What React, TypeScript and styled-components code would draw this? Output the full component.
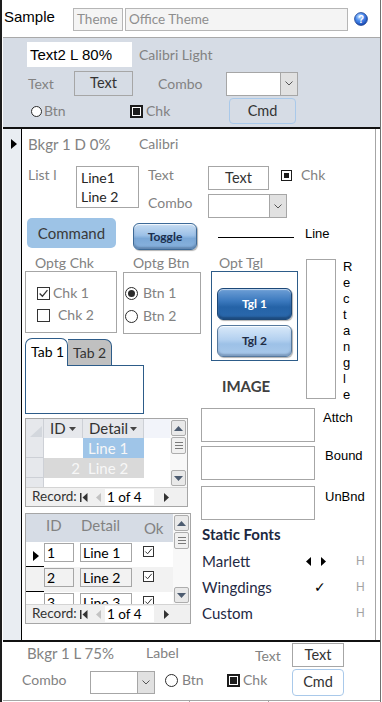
import { FC } from 'react';
import styled, { createGlobalStyle, css } from 'styled-components';

const CAL = `Lato, "Open Sans", "DejaVu Sans", sans-serif`;
const ARIAL = `"Liberation Sans", Arial, sans-serif`;
const LABEL = '#828282';
const EDGE = '#a6a6a6';
const TAB_EDGE = '#2d5c89';

const GlobalStyle = createGlobalStyle`
  html, body { margin: 0; padding: 0; background: #fff; }
  body { width: 382px; height: 702px; overflow: hidden; font-family: ${CAL}; }
  *, *::before, *::after { box-sizing: border-box; }
`;

const Frame = styled.div`
  width: 381px;
  height: 702px;
  border-left: 2px solid #1d1d1d;
  border-right: 1px solid #707070;
  display: flex;
  flex-direction: column;
  overflow: hidden;
`;

/* ---------- title ---------- */
const TitleBar = styled.header`
  flex: none;
  height: 37px;
  display: flex;
  align-items: flex-start;
  padding: 8px 0 0 2px;
`;

const FormTitle = styled.div`
  width: 69px;
  font: 15px/18px ${ARIAL};
  color: #000;
`;

const ThemeField = styled.div<{ $w: number }>`
  width: ${p => p.$w}px;
  height: 23px;
  margin-right: 2px;
  padding-left: 3px;
  border: 1px solid #b6b6b6;
  background: #f4f4f4;
  color: #8e8e8e;
  font: 13.5px/21px ${CAL};
`;

const HelpIcon = styled.svg`
  flex: none;
  margin: 4px 0 0 4px;
`;

/* ---------- shared controls ---------- */
const Caption = styled.span<{ $w?: number; $size?: number; $mt?: number; $ml?: number; $pl?: number }>`
  flex: none;
  ${p => p.$w !== undefined && css`width: ${p.$w}px;`}
  margin-top: ${p => p.$mt ?? 0}px;
  margin-left: ${p => p.$ml ?? 0}px;
  padding-left: ${p => p.$pl ?? 0}px;
  font: ${p => p.$size ?? 14}px/18px ${CAL};
  color: ${LABEL};
  white-space: nowrap;
`;

const TextBox = styled.div<{ $w: number; $h: number; $mt?: number }>`
  flex: none;
  width: ${p => p.$w}px;
  height: ${p => p.$h}px;
  margin-top: ${p => p.$mt ?? 0}px;
  border: 1px solid ${EDGE};
  display: flex;
  align-items: center;
  justify-content: center;
  font: 14.5px/1 ${CAL};
  color: #333;
`;

const ComboBox = styled.div<{ $w: number; $h: number; $mt?: number }>`
  flex: none;
  width: ${p => p.$w}px;
  height: ${p => p.$h}px;
  margin-top: ${p => p.$mt ?? 0}px;
  display: flex;
  border: 1px solid ${EDGE};
  background: #fff;
`;

const ComboField = styled.div`
  flex: 1;
`;

const ComboButton = styled.div`
  width: 17px;
  border-left: 1px solid ${EDGE};
  background: #e1e1e1;
  display: flex;
  align-items: center;
  justify-content: center;
`;

const OptionItem = styled.div<{ $w?: number; $gap: number; $ml?: number; $mt?: number }>`
  flex: none;
  display: flex;
  align-items: center;
  gap: ${p => p.$gap}px;
  ${p => p.$w !== undefined && css`width: ${p.$w}px;`}
  margin-left: ${p => p.$ml ?? 0}px;
  margin-top: ${p => p.$mt ?? 0}px;
  height: 18px;
  font: 14px/18px ${CAL};
  color: ${LABEL};
`;

const RadioMark = styled.span<{ $size: number; $on?: boolean }>`
  flex: none;
  width: ${p => p.$size}px;
  height: ${p => p.$size}px;
  border: 1px solid #2b2b2b;
  border-radius: 50%;
  background: #fff;
  display: flex;
  align-items: center;
  justify-content: center;
  ${p =>
    p.$on &&
    css`
      &::after {
        content: '';
        width: ${p.$size - 6}px;
        height: ${p.$size - 6}px;
        border-radius: 50%;
        background: #2b2b2b;
      }
    `}
`;

const FilledCheck = styled.span<{ $size: number; $border: number; $inner: number }>`
  flex: none;
  width: ${p => p.$size}px;
  height: ${p => p.$size}px;
  border: ${p => p.$border}px solid #1c1c1c;
  background: #fff;
  display: flex;
  align-items: center;
  justify-content: center;
  &::after {
    content: '';
    width: ${p => p.$inner}px;
    height: ${p => p.$inner}px;
    background: #1c1c1c;
  }
`;

const TickBox = styled.span<{ $size: number; $ml?: number; $mt?: number }>`
  flex: none;
  width: ${p => p.$size}px;
  height: ${p => p.$size}px;
  margin-left: ${p => p.$ml ?? 0}px;
  margin-top: ${p => p.$mt ?? 0}px;
  border: 1px solid #333;
  background: #fff;
  display: flex;
  align-items: center;
  justify-content: center;
`;

const CmdButton = styled.div<{ $w: number; $h: number; $bg: string }>`
  flex: none;
  width: ${p => p.$w}px;
  height: ${p => p.$h}px;
  border: 1px solid #a9c9ea;
  border-radius: 4px;
  background: ${p => p.$bg};
  display: flex;
  align-items: center;
  justify-content: center;
  font: 14.5px/1 ${CAL};
  color: #333;
`;

/* ---------- header band ---------- */
const HeaderSection = styled.section`
  flex: none;
  margin-left: 1px;
  width: 377px;
  height: 92px;
  background: #d6dce5;
  border-top: 1px solid #a9a9a9;
  border-bottom: 2px solid #111;
  padding: 4px 0 0 24px;
`;

const BandRow = styled.div<{ $h: number; $mt?: number; $pl?: number }>`
  display: flex;
  align-items: center;
  height: ${p => p.$h}px;
  margin-top: ${p => p.$mt ?? 0}px;
  padding-left: ${p => p.$pl ?? 0}px;
`;

const AccentBox = styled.div`
  flex: none;
  width: 105px;
  height: 25px;
  padding-left: 3px;
  background: #fff;
  font: 15px/25px ${ARIAL};
  color: #000;
`;

/* ---------- detail ---------- */
const DetailSection = styled.section`
  flex: none;
  margin-left: 1px;
  width: 377px;
  height: 511px;
  display: flex;
`;

const RecordStrip = styled.div`
  flex: none;
  width: 19px;
  background: #e9edf2;
  border-right: 1px solid #000;
  padding: 4px 0 0 8px;
`;

const DetailBody = styled.div`
  flex: none;
  width: 354px;
  border-right: 1px solid ${EDGE};
  display: flex;
  flex-direction: column;
`;

const TopLine = styled.div`
  display: flex;
  height: 18px;
  margin-top: 6px;
  padding-left: 6px;
`;

const FieldsRow = styled.div`
  display: flex;
  align-items: flex-start;
  height: 52px;
  margin-top: 13px;
  padding-left: 6px;
`;

const ListBox = styled.div`
  flex: none;
  width: 63px;
  height: 42px;
  border: 1px solid ${EDGE};
  padding: 1px 0 0 4px;
  font: 14px/19px ${CAL};
  color: #262626;
`;

const LabelStack = styled.div`
  flex: none;
  width: 60px;
  margin-left: 9px;
  display: flex;
  flex-direction: column;
`;

const FieldStack = styled.div`
  display: flex;
  flex-direction: column;
`;

const FieldLine = styled.div`
  display: flex;
  align-items: flex-start;
  height: 24px;
`;

const ButtonsRow = styled.div`
  display: flex;
  align-items: flex-start;
  height: 32px;
`;

const CommandButton = styled.div`
  flex: none;
  width: 89px;
  height: 30px;
  margin-left: 5px;
  border-radius: 5px;
  background: #9dc3e6;
  display: flex;
  align-items: center;
  justify-content: center;
  font: 15px/1 ${CAL};
  color: #3a3a3a;
`;

type Tone = 'toggle' | 'dark' | 'light';

const tones: Record<Tone, ReturnType<typeof css>> = {
  toggle: css`
    background: linear-gradient(#c6dcf2 0%, #9dc1e7 45%, #7ba8d7 58%, #8ab3de 100%);
    border: 1px solid #3d6a98;
    color: #1b2f4e;
    box-shadow: inset 0 1px 1px rgba(255, 255, 255, 0.85), inset 0 -2px 2px rgba(20, 50, 90, 0.35),
      1px 1px 1px rgba(0, 0, 0, 0.3);
  `,
  dark: css`
    background: linear-gradient(#6e9fd6 0%, #3b79be 40%, #2563a7 60%, #2b69ac 100%);
    border: 1px solid #1c4878;
    color: #fff;
    box-shadow: inset 0 1px 1px rgba(255, 255, 255, 0.6), inset 0 -2px 2px rgba(10, 30, 60, 0.4),
      1px 1px 1px rgba(0, 0, 0, 0.3);
  `,
  light: css`
    background: linear-gradient(#d9e9f9 0%, #b4d1f0 45%, #9dc1e7 60%, #a9c9ea 100%);
    border: 1px solid #56799e;
    color: #1f2d46;
    box-shadow: inset 0 1px 1px rgba(255, 255, 255, 0.9), inset 0 -2px 2px rgba(40, 70, 110, 0.35),
      1px 1px 1px rgba(0, 0, 0, 0.3);
  `,
};

const BevelButton = styled.div<{ $tone: Tone; $w: number; $h: number; $ml?: number; $mt?: number }>`
  flex: none;
  width: ${p => p.$w}px;
  height: ${p => p.$h}px;
  margin-left: ${p => p.$ml ?? 0}px;
  margin-top: ${p => p.$mt ?? 0}px;
  border-radius: 6px;
  display: flex;
  align-items: center;
  justify-content: center;
  font: 700 12px/1 ${CAL};
  ${p => tones[p.$tone]}
`;

const LineShape = styled.div`
  flex: none;
  width: 76px;
  height: 1px;
  margin: 19px 0 0 21px;
  background: #000;
`;

const ShapeLabel = styled.span<{ $ml?: number; $mt?: number }>`
  flex: none;
  margin-left: ${p => p.$ml ?? 0}px;
  margin-top: ${p => p.$mt ?? 0}px;
  font: 13px/15px ${ARIAL};
  color: #000;
`;

const MainArea = styled.div`
  display: flex;
  margin-top: 4px;
`;

const LeftColumn = styled.div`
  flex: none;
  width: 179px;
  padding-left: 3px;
  display: flex;
  flex-direction: column;
`;

const RightColumn = styled.div`
  flex: 1;
  display: flex;
  flex-direction: column;
`;

const GroupRow = styled.div`
  display: flex;
  gap: 6px;
  height: 80px;
`;

const GroupBlock = styled.div<{ $ml?: number }>`
  flex: none;
  margin-left: ${p => p.$ml ?? 0}px;
  display: flex;
  flex-direction: column;
`;

const GroupCaption = styled.div<{ $pl: number }>`
  height: 17px;
  padding-left: ${p => p.$pl}px;
  font: 14px/17px ${CAL};
  color: ${LABEL};
`;

const GroupFrame = styled.div<{ $w: number; $h: number; $mt?: number; $pad: string; $edge?: string }>`
  width: ${p => p.$w}px;
  height: ${p => p.$h}px;
  margin-top: ${p => p.$mt ?? 0}px;
  padding: ${p => p.$pad};
  border: 1px solid ${p => p.$edge ?? EDGE};
  display: flex;
  flex-direction: column;
`;

const GroupLine = styled.div<{ $gap: number; $mt?: number }>`
  display: flex;
  align-items: center;
  gap: ${p => p.$gap}px;
  height: 14px;
  margin-top: ${p => p.$mt ?? 0}px;
  font: 14px/18px ${CAL};
  color: ${LABEL};
`;

const TabControl = styled.div`
  margin-top: 4px;
  display: flex;
  flex-direction: column;
`;

const TabStrip = styled.div`
  display: flex;
  align-items: flex-start;
  height: 27px;
`;

const TabHandle = styled.div<{ $active?: boolean }>`
  flex: none;
  width: ${p => (p.$active ? 43 : 44)}px;
  height: ${p => (p.$active ? 28 : 26)}px;
  margin-top: ${p => (p.$active ? 0 : 1)}px;
  padding: 3px 0 0 5px;
  border: 1px solid ${TAB_EDGE};
  border-bottom: none;
  ${p => !p.$active && css`border-left: none;`}
  border-radius: ${p => (p.$active ? '7px 7px 0 0' : '0 7px 0 0')};
  background: ${p => (p.$active ? '#fff' : '#c0c0c0')};
  font: 14px/20px ${CAL};
  color: ${p => (p.$active ? '#000' : '#333')};
  position: relative;
  z-index: ${p => (p.$active ? 1 : 0)};
`;

const TabPage = styled.div`
  width: 119px;
  height: 49px;
  border: 1px solid ${TAB_EDGE};
`;

/* datasheets */
const Sheet = styled.div<{ $w: number; $h: number; $mt: number }>`
  flex: none;
  width: ${p => p.$w}px;
  height: ${p => p.$h}px;
  margin-top: ${p => p.$mt}px;
  border: 1px solid ${EDGE};
  background: #fff;
  display: flex;
  flex-direction: column;
`;

const SheetBody = styled.div<{ $h: number }>`
  flex: none;
  height: ${p => p.$h}px;
  display: flex;
`;

const SheetGrid = styled.div`
  flex: 1;
  display: flex;
  flex-direction: column;
  overflow: hidden;
`;

const GridHead = styled.div`
  flex: none;
  height: 19px;
  display: flex;
`;

const CornerCell = styled.div`
  width: 18px;
  background: #e6e8ec;
  border-right: 1px solid #cdd0d6;
  display: flex;
  align-items: flex-end;
  justify-content: flex-end;
  padding: 0 1px 1px 0;
`;

const HeadCell = styled.div<{ $w: number }>`
  flex: none;
  width: ${p => p.$w}px;
  background: #e6e8ec;
  border-right: 1px solid #cdd0d6;
  display: flex;
  align-items: center;
  justify-content: space-between;
  padding: 0 6px 0 6px;
  font: 15px/19px ${CAL};
  color: #333;
`;

const HeadFill = styled.div`
  flex: 1;
  background: #f2f4fa;
`;

const GridRow = styled.div`
  flex: none;
  height: 20px;
  display: flex;
`;

const SelectorCell = styled.div`
  flex: none;
  width: 18px;
  background: #e6e8ec;
  border-right: 1px solid #cdd0d6;
  border-bottom: 1px solid #cdd0d6;
`;

type CellTone = 'plain' | 'selected' | 'grey';

const DataCell = styled.div<{ $w: number; $tone: CellTone; $right?: boolean }>`
  flex: none;
  width: ${p => p.$w}px;
  padding: ${p => (p.$right ? '0 3px 0 0' : '0 0 0 5px')};
  text-align: ${p => (p.$right ? 'right' : 'left')};
  font: 15px/20px ${CAL};
  background: ${p => (p.$tone === 'selected' ? '#9fc5e8' : p.$tone === 'grey' ? '#d9d9d9' : '#fff')};
  color: ${p => (p.$tone === 'plain' ? '#000' : '#f7f7f7')};
`;

const FormHead = styled.div`
  flex: none;
  height: 28px;
  display: flex;
  align-items: flex-start;
  padding-top: 2px;
  background: #d6dce5;
`;

const FormRow = styled.div<{ $alt?: boolean }>`
  flex: none;
  height: 25px;
  display: flex;
  align-items: flex-start;
  background: ${p => (p.$alt ? '#f2f2f2' : '#fff')};
`;

const FormSelector = styled.div`
  flex: none;
  width: 18px;
  height: 25px;
  border-bottom: 1px solid #000;
  padding: 3px 0 0 7px;
`;

const FormField = styled.div<{ $w: number; $ml?: number }>`
  flex: none;
  width: ${p => p.$w}px;
  height: 19px;
  margin: 1px 0 0 ${p => p.$ml ?? 0}px;
  padding-left: 2px;
  border: 1px solid ${EDGE};
  font: 14px/17px ${CAL};
  color: #000;
`;

const ScrollBar = styled.div`
  flex: none;
  width: 17px;
  padding: 1px 1px 1px 1px;
  background: #f8f8f8;
  display: flex;
  flex-direction: column;
  align-items: center;
`;

const ScrollButton = styled.div`
  flex: none;
  width: 15px;
  height: 16px;
  border: 1px solid #adadad;
  border-radius: 2px;
  background: #e9e9e9;
  display: flex;
  align-items: center;
  justify-content: center;
`;

const ScrollThumb = styled.div`
  flex: none;
  width: 15px;
  height: 17px;
  margin-top: 1px;
  border: 1px solid #adadad;
  border-radius: 2px;
  background: #f0f0f0;
  display: flex;
  flex-direction: column;
  align-items: center;
  justify-content: center;
  gap: 2px;
  span {
    width: 8px;
    height: 1px;
    background: #7a7a7a;
  }
`;

const ScrollTrack = styled.div`
  flex: 1;
`;

const RecordNav = styled.div`
  flex: 1;
  display: flex;
  align-items: center;
  background: #f0f0f0;
  border-top: 1px solid #d4d4d4;
`;

const NavLabel = styled.span`
  flex: none;
  width: 54px;
  padding-left: 6px;
  font: 13.5px/1 ${CAL};
  color: #333;
`;

const NavBox = styled.span`
  flex: none;
  width: 49px;
  height: 16px;
  margin-left: 4px;
  padding-left: 2px;
  background: #fff;
  font: 13.5px/16px ${CAL};
  color: #000;
`;

const NavGlyph = styled.svg<{ $ml?: number }>`
  flex: none;
  margin-left: ${p => p.$ml ?? 0}px;
`;

/* right column */
const TopRow = styled.div`
  display: flex;
  align-items: flex-start;
  height: 145px;
`;

const ImageLabel = styled.div`
  margin-top: 15px;
  padding-left: 11px;
  font: 700 15px/20px ${CAL};
  color: #404040;
`;

const RectBlock = styled.div`
  flex: none;
  margin: 5px 0 0 8px;
  display: flex;
  align-items: flex-start;
`;

const RectBox = styled.div`
  width: 30px;
  height: 140px;
  border: 1px solid ${EDGE};
`;

const RectLetters = styled.div`
  margin-left: 7px;
  display: flex;
  flex-direction: column;
  font: 13px/16px ${ARIAL};
  color: #000;
`;

const AttachRow = styled.div<{ $mt: number }>`
  display: flex;
  align-items: flex-start;
  margin-top: ${p => p.$mt}px;
`;

const AttachFrame = styled.div`
  flex: none;
  width: 114px;
  height: 34px;
  border: 1px solid ${EDGE};
`;

const FontsHeading = styled.div`
  margin-top: 5px;
  padding-left: 1px;
  font: 700 15px/18px ${CAL};
  color: #1c2840;
`;

const FontRow = styled.div<{ $mt?: number }>`
  display: flex;
  align-items: center;
  height: 26px;
  margin-top: ${p => p.$mt ?? 0}px;
`;

const FontName = styled.span`
  flex: none;
  width: 105px;
  padding-left: 1px;
  font: 15px/18px ${CAL};
  color: #1f2a44;
`;

const GlyphCell = styled.span<{ $pl?: number }>`
  flex: none;
  width: 50px;
  padding-left: ${p => p.$pl ?? 0}px;
  display: flex;
  align-items: center;
  gap: 10px;
  font: 14px/18px "DejaVu Sans", sans-serif;
  color: #000;
`;

const HMark = styled.span`
  font: 12px/1 ${ARIAL};
  color: #a3a3a3;
`;

/* ---------- footer ---------- */
const FooterSection = styled.footer`
  flex: none;
  margin-left: 1px;
  width: 377px;
  height: 60px;
  border-top: 2px solid #111;
`;

const FooterRow = styled.div<{ $pl: number }>`
  display: flex;
  align-items: flex-start;
  height: 27px;
  padding-left: ${p => p.$pl}px;
`;

const BottomEdge = styled.div`
  flex: none;
  margin-left: 1px;
  width: 377px;
  height: 2px;
  border-top: 1px solid ${EDGE};
  display: flex;
`;

const EdgeSegment = styled.span<{ $w: number }>`
  width: ${p => p.$w}px;
  border-right: 1px solid ${EDGE};
`;

/* ---------- drawings ---------- */
const Chevron: FC = () => (
  <svg width="8" height="5" viewBox="0 0 8 5">
    <path d="M0.5 0.5L4 4L7.5 0.5" fill="none" stroke="#555" strokeWidth="1" />
  </svg>
);

const Combo: FC<{ w: number; h: number; mt?: number }> = ({ w, h, mt }) => (
  <ComboBox $w={w} $h={h} $mt={mt}>
    <ComboField />
    <ComboButton>
      <Chevron />
    </ComboButton>
  </ComboBox>
);

const Tick: FC<{ size: number }> = ({ size }) => (
  <svg width={size} height={size} viewBox="0 0 10 10">
    <path d="M1.5 5L4 7.5L8.6 2" fill="none" stroke="#333" strokeWidth="1.1" />
  </svg>
);

const Pointer: FC = () => (
  <svg width="6" height="10" viewBox="0 0 6 10">
    <path d="M0 0L6 5L0 10Z" fill="#000" />
  </svg>
);

const SortArrow: FC = () => (
  <svg width="7" height="4" viewBox="0 0 7 4">
    <path d="M0 0H7L3.5 4Z" fill="#444" />
  </svg>
);

const Scroller: FC = () => (
  <ScrollBar>
    <ScrollButton>
      <svg width="9" height="5" viewBox="0 0 9 5">
        <path d="M0 5H9L4.5 0Z" fill="#4d5c70" />
      </svg>
    </ScrollButton>
    <ScrollThumb>
      <span />
      <span />
      <span />
    </ScrollThumb>
    <ScrollTrack />
    <ScrollButton>
      <svg width="9" height="5" viewBox="0 0 9 5">
        <path d="M0 0H9L4.5 5Z" fill="#4d5c70" />
      </svg>
    </ScrollButton>
  </ScrollBar>
);

const Navigator: FC = () => (
  <RecordNav>
    <NavLabel>Record:</NavLabel>
    <NavGlyph width="8" height="9" viewBox="0 0 8 9">
      <rect x="0" y="0" width="1.5" height="9" fill="#333" />
      <path d="M7.5 0V9L2.5 4.5Z" fill="#333" />
    </NavGlyph>
    <NavGlyph $ml={8} width="5" height="9" viewBox="0 0 5 9">
      <path d="M5 0V9L0 4.5Z" fill="#c3c3c3" />
    </NavGlyph>
    <NavBox>1 of 4</NavBox>
    <NavGlyph $ml={10} width="5" height="9" viewBox="0 0 5 9">
      <path d="M0 0V9L5 4.5Z" fill="#333" />
    </NavGlyph>
  </RecordNav>
);

const App: FC = () => {
  return (
    <>
      <GlobalStyle />
      <Frame>
        <TitleBar>
          <FormTitle>Sample</FormTitle>
          <ThemeField $w={50}>Theme</ThemeField>
          <ThemeField $w={223}>Office Theme</ThemeField>
          <HelpIcon width="14" height="14" viewBox="0 0 14 14">
            <defs>
              <radialGradient id="helpGlow" cx="40%" cy="32%" r="70%">
                <stop offset="0" stopColor="#d4e6ff" />
                <stop offset="0.45" stopColor="#4d8ff0" />
                <stop offset="1" stopColor="#1545b0" />
              </radialGradient>
            </defs>
            <circle cx="7" cy="7" r="6.4" fill="url(#helpGlow)" stroke="#1b3f8c" strokeWidth="0.8" />
            <text x="7" y="10.6" textAnchor="middle" fontSize="10" fontWeight="700" fill="#fff" fontFamily="Liberation Sans, Arial, sans-serif">
              ?
            </text>
          </HelpIcon>
        </TitleBar>

        <HeaderSection>
          <BandRow $h={25}>
            <AccentBox>Text2 L 80%</AccentBox>
            <Caption $ml={7}>Calibri Light</Caption>
          </BandRow>
          <BandRow $h={25} $mt={4}>
            <Caption $w={47} $pl={1}>
              Text
            </Caption>
            <TextBox $w={59} $h={25}>
              Text
            </TextBox>
            <Caption $w={68} $ml={25}>
              Combo
            </Caption>
            <Combo w={72} h={24} />
          </BandRow>
          <BandRow $h={26} $mt={2}>
            <OptionItem $w={99} $gap={2} $ml={4}>
              <RadioMark $size={11} />
              Btn
            </OptionItem>
            <OptionItem $w={99} $gap={3}>
              <FilledCheck $size={13} $border={2} $inner={7} />
              Chk
            </OptionItem>
            <CmdButton $w={67} $h={26} $bg="transparent">
              Cmd
            </CmdButton>
          </BandRow>
        </HeaderSection>

        <DetailSection>
          <RecordStrip>
            <Pointer />
          </RecordStrip>
          <DetailBody>
            <TopLine>
              <Caption $w={111} $size={15}>
                Bkgr 1 D 0%
              </Caption>
              <Caption $size={14}>Calibri</Caption>
            </TopLine>

            <FieldsRow>
              <Caption $w={48}>List l</Caption>
              <ListBox>
                <div>Line1</div>
                <div>Line 2</div>
              </ListBox>
              <LabelStack>
                <Caption>Text</Caption>
                <Caption $mt={10}>Combo</Caption>
              </LabelStack>
              <FieldStack>
                <FieldLine>
                  <TextBox $w={61} $h={24}>
                    Text
                  </TextBox>
                  <OptionItem $gap={9} $ml={12}>
                    <FilledCheck $size={11} $border={1} $inner={5} />
                    Chk
                  </OptionItem>
                </FieldLine>
                <Combo w={79} h={24} mt={4} />
              </FieldStack>
            </FieldsRow>

            <ButtonsRow>
              <CommandButton>Command</CommandButton>
              <BevelButton $tone="toggle" $w={64} $h={27} $ml={17} $mt={5}>
                Toggle
              </BevelButton>
              <LineShape />
              <ShapeLabel $ml={11} $mt={8}>
                Line
              </ShapeLabel>
            </ButtonsRow>

            <MainArea>
              <LeftColumn>
                <GroupRow>
                  <GroupBlock>
                    <GroupCaption $pl={10}>Optg Chk</GroupCaption>
                    <GroupFrame $w={92} $h={62} $pad="14px 0 0 11px">
                      <GroupLine $gap={3}>
                        <TickBox $size={13}>
                          <Tick size={11} />
                        </TickBox>
                        Chk 1
                      </GroupLine>
                      <GroupLine $gap={8} $mt={8}>
                        <TickBox $size={13} />
                        Chk 2
                      </GroupLine>
                    </GroupFrame>
                  </GroupBlock>
                  <GroupBlock>
                    <GroupCaption $pl={10}>Optg Btn</GroupCaption>
                    <GroupFrame $w={78} $h={62} $mt={1} $pad="13px 0 0 1px">
                      <GroupLine $gap={5}>
                        <RadioMark $size={13} $on />
                        Btn 1
                      </GroupLine>
                      <GroupLine $gap={5} $mt={9}>
                        <RadioMark $size={13} />
                        Btn 2
                      </GroupLine>
                    </GroupFrame>
                  </GroupBlock>
                </GroupRow>

                <TabControl>
                  <TabStrip>
                    <TabHandle $active>Tab 1</TabHandle>
                    <TabHandle>Tab 2</TabHandle>
                  </TabStrip>
                  <TabPage />
                </TabControl>

                <Sheet $w={163} $h={89} $mt={4}>
                  <SheetBody $h={68}>
                    <SheetGrid>
                      <GridHead>
                        <CornerCell>
                          <svg width="12" height="11" viewBox="0 0 12 11">
                            <path d="M12 0V11H0Z" fill="#d3d7dd" />
                          </svg>
                        </CornerCell>
                        <HeadCell $w={39}>
                          ID
                          <SortArrow />
                        </HeadCell>
                        <HeadCell $w={61}>
                          Detail
                          <SortArrow />
                        </HeadCell>
                        <HeadFill />
                      </GridHead>
                      <GridRow>
                        <SelectorCell />
                        <DataCell $w={39} $tone="plain" />
                        <DataCell $w={61} $tone="selected">
                          Line 1
                        </DataCell>
                      </GridRow>
                      <GridRow>
                        <SelectorCell />
                        <DataCell $w={39} $tone="grey" $right>
                          2
                        </DataCell>
                        <DataCell $w={61} $tone="grey">
                          Line 2
                        </DataCell>
                      </GridRow>
                      <GridRow>
                        <SelectorCell />
                      </GridRow>
                    </SheetGrid>
                    <Scroller />
                  </SheetBody>
                  <Navigator />
                </Sheet>

                <Sheet $w={166} $h={111} $mt={6}>
                  <SheetBody $h={90}>
                    <SheetGrid>
                      <FormHead>
                        <Caption $w={55} $pl={20} $size={15}>
                          ID
                        </Caption>
                        <Caption $w={63} $size={15}>
                          Detail
                        </Caption>
                        <Caption $mt={3} $size={15}>
                          Ok
                        </Caption>
                      </FormHead>
                      <FormRow>
                        <FormSelector>
                          <Pointer />
                        </FormSelector>
                        <FormField $w={30}>1</FormField>
                        <FormField $w={52} $ml={6}>
                          Line 1
                        </FormField>
                        <TickBox $size={11} $ml={11} $mt={4}>
                          <Tick size={9} />
                        </TickBox>
                      </FormRow>
                      <FormRow $alt>
                        <FormSelector />
                        <FormField $w={30}>2</FormField>
                        <FormField $w={52} $ml={6}>
                          Line 2
                        </FormField>
                        <TickBox $size={11} $ml={11} $mt={4}>
                          <Tick size={9} />
                        </TickBox>
                      </FormRow>
                      <FormRow>
                        <FormSelector />
                        <FormField $w={30}>3</FormField>
                        <FormField $w={52} $ml={6}>
                          Line 3
                        </FormField>
                        <TickBox $size={11} $ml={11} $mt={4}>
                          <Tick size={9} />
                        </TickBox>
                      </FormRow>
                    </SheetGrid>
                    <Scroller />
                  </SheetBody>
                  <Navigator />
                </Sheet>
              </LeftColumn>

              <RightColumn>
                <TopRow>
                  <GroupBlock $ml={10}>
                    <GroupCaption $pl={8}>Opt Tgl</GroupCaption>
                    <GroupFrame $w={87} $h={90} $pad="16px 0 0 5px" $edge={TAB_EDGE}>
                      <BevelButton $tone="dark" $w={75} $h={32}>
                        Tgl 1
                      </BevelButton>
                      <BevelButton $tone="light" $w={75} $h={32} $mt={5}>
                        Tgl 2
                      </BevelButton>
                    </GroupFrame>
                    <ImageLabel>IMAGE</ImageLabel>
                  </GroupBlock>
                  <RectBlock>
                    <RectBox />
                    <RectLetters>
                      {'Rectangle'.split('').map((c, i) => (
                        <span key={i}>{c}</span>
                      ))}
                    </RectLetters>
                  </RectBlock>
                </TopRow>

                <AttachRow $mt={9}>
                  <AttachFrame />
                  <ShapeLabel $ml={8} $mt={2}>
                    Attch
                  </ShapeLabel>
                </AttachRow>
                <AttachRow $mt={4}>
                  <AttachFrame />
                  <ShapeLabel $ml={10} $mt={2}>
                    Bound
                  </ShapeLabel>
                </AttachRow>
                <AttachRow $mt={6}>
                  <AttachFrame />
                  <ShapeLabel $ml={10} $mt={3}>
                    UnBnd
                  </ShapeLabel>
                </AttachRow>

                <FontsHeading>Static Fonts</FontsHeading>
                <FontRow $mt={5}>
                  <FontName>Marlett</FontName>
                  <GlyphCell>
                    <svg width="5" height="9" viewBox="0 0 5 9">
                      <path d="M5 0V9L0 4.5Z" fill="#000" />
                    </svg>
                    <svg width="5" height="9" viewBox="0 0 5 9">
                      <path d="M0 0V9L5 4.5Z" fill="#000" />
                    </svg>
                  </GlyphCell>
                  <HMark>H</HMark>
                </FontRow>
                <FontRow>
                  <FontName>Wingdings</FontName>
                  <GlyphCell $pl={8}>✓</GlyphCell>
                  <HMark>H</HMark>
                </FontRow>
                <FontRow>
                  <FontName>Custom</FontName>
                  <GlyphCell />
                  <HMark>H</HMark>
                </FontRow>
              </RightColumn>
            </MainArea>
          </DetailBody>
        </DetailSection>

        <FooterSection>
          <FooterRow $pl={24}>
            <Caption $w={119} $mt={2} $size={15}>
              Bkgr 1 L 75%
            </Caption>
            <Caption $w={109} $mt={2}>
              Label
            </Caption>
            <Caption $w={37} $mt={5}>
              Text
            </Caption>
            <TextBox $w={52} $h={24} $mt={1}>
              Text
            </TextBox>
          </FooterRow>
          <FooterRow $pl={19}>
            <Caption $w={68} $mt={2}>
              Combo
            </Caption>
            <Combo w={65} h={23} mt={2} />
            <OptionItem $w={62} $gap={4} $ml={10} $mt={2}>
              <RadioMark $size={13} />
              Btn
            </OptionItem>
            <OptionItem $w={65} $gap={3} $mt={2}>
              <FilledCheck $size={13} $border={2} $inner={7} />
              Chk
            </OptionItem>
            <CmdButton $w={52} $h={27} $bg="#fff">
              Cmd
            </CmdButton>
          </FooterRow>
        </FooterSection>
        <BottomEdge>
          <EdgeSegment $w={187} />
          <EdgeSegment $w={79} />
        </BottomEdge>
      </Frame>
    </>
  );
};

export default App;
